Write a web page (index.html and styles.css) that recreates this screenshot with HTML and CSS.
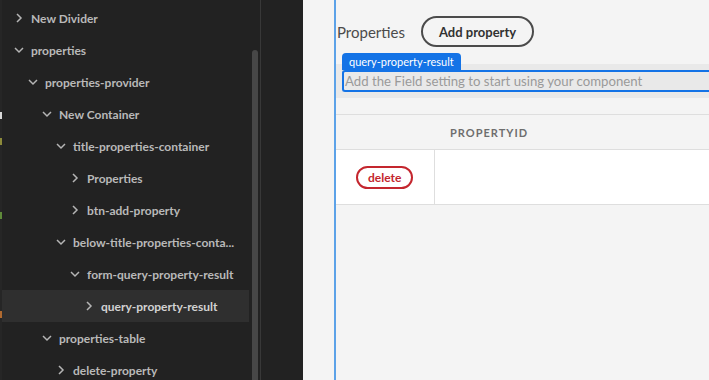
FILE: index.html
```html
<!DOCTYPE html>
<html>
<head>
<meta charset="utf-8">
<link rel="stylesheet" href="styles.css">
</head>
<body>
<div class="app">
  <aside class="sidebar">
    <div class="edge">
      <span class="mark m-white"></span>
      <span class="mark m-olive"></span>
      <span class="mark m-green"></span>
      <span class="mark m-orange"></span>
    </div>
    <ul class="tree">
      <li class="row l0"><svg class="chev" viewBox="0 0 10 10"><polyline points="3,1 7,5 3,9"/></svg><span>New Divider</span></li>
      <li class="row l0"><svg class="chev" viewBox="0 0 10 10"><polyline points="1,3 5,7 9,3"/></svg><span>properties</span></li>
      <li class="row l1"><svg class="chev" viewBox="0 0 10 10"><polyline points="1,3 5,7 9,3"/></svg><span>properties-provider</span></li>
      <li class="row l2"><svg class="chev" viewBox="0 0 10 10"><polyline points="1,3 5,7 9,3"/></svg><span>New Container</span></li>
      <li class="row l3"><svg class="chev" viewBox="0 0 10 10"><polyline points="1,3 5,7 9,3"/></svg><span>title-properties-container</span></li>
      <li class="row l4"><svg class="chev" viewBox="0 0 10 10"><polyline points="3,1 7,5 3,9"/></svg><span>Properties</span></li>
      <li class="row l4"><svg class="chev" viewBox="0 0 10 10"><polyline points="3,1 7,5 3,9"/></svg><span>btn-add-property</span></li>
      <li class="row l3"><svg class="chev" viewBox="0 0 10 10"><polyline points="1,3 5,7 9,3"/></svg><span>below-title-properties-conta...</span></li>
      <li class="row l4"><svg class="chev" viewBox="0 0 10 10"><polyline points="1,3 5,7 9,3"/></svg><span>form-query-property-result</span></li>
      <li class="row l5 selected"><svg class="chev" viewBox="0 0 10 10"><polyline points="3,1 7,5 3,9"/></svg><span>query-property-result</span></li>
      <li class="row l2"><svg class="chev" viewBox="0 0 10 10"><polyline points="1,3 5,7 9,3"/></svg><span>properties-table</span></li>
      <li class="row l3"><svg class="chev" viewBox="0 0 10 10"><polyline points="3,1 7,5 3,9"/></svg><span>delete-property</span></li>
    </ul>
    <div class="scroll"><div class="thumb"></div></div>
    <div class="divider"></div>
    <div class="rail"></div>
  </aside>
  <main class="main">
    <div class="canvas">
      <div class="title-row">
        <h2 class="title">Properties</h2>
        <button class="btn-add">Add property</button>
      </div>
      <div class="field-band">
        <div class="field-tab">query-property-result</div>
        <div class="field-box">Add the Field setting to start using your component</div>
      </div>
      <table class="ptable">
        <thead>
          <tr><th class="c1"></th><th class="c2">PROPERTYID</th></tr>
        </thead>
        <tbody>
          <tr><td class="c1"><button class="btn-del">delete</button></td><td class="c2"></td></tr>
        </tbody>
      </table>
    </div>
  </main>
</div>
</body>
</html>
```

FILE: styles.css
```css
* { box-sizing: border-box; }
html, body { margin: 0; padding: 0; }
body {
  width: 709px;
  height: 380px;
  overflow: hidden;
  font-family: Lato, "Open Sans", sans-serif;
  background: #f4f4f4;
}
.app { display: flex; height: 380px; }

.sidebar {
  width: 303px;
  flex: none;
  background: #222222;
  display: flex;
  position: relative;
}
.edge {
  width: 2px;
  flex: none;
  background: #262626;
  position: relative;
}
.mark { position: absolute; left: 0; width: 2px; height: 7px; }
.m-white { top: 112px; background: #d8d8d8; }
.m-olive { top: 138px; background: #8c8a3a; }
.m-green { top: 212px; background: #5f8a3a; }
.m-orange { top: 311px; background: #b06a30; }

.tree {
  list-style: none;
  margin: 0;
  padding: 2px 0 0;
  width: 247px;
  flex: none;
}
.row {
  height: 32px;
  display: flex;
  align-items: center;
  color: #b9b9b9;
  font-size: 12px;
  font-weight: 700;
  white-space: nowrap;
}
.row .chev {
  width: 10px;
  height: 10px;
  margin-right: 7px;
  flex: none;
  fill: none;
  stroke: #b5b5b5;
  stroke-width: 1.5;
}
.l0 { padding-left: 12px; }
.l1 { padding-left: 26px; }
.l2 { padding-left: 40px; }
.l3 { padding-left: 54px; }
.l4 { padding-left: 68px; }
.l5 { padding-left: 82px; }
.row.selected { background: #2f2f2f; color: #d2d2d2; }

.scroll {
  width: 6px;
  margin-left: 3px;
  flex: none;
  padding-top: 50px;
}
.thumb {
  height: 100%;
  background: #474747;
  border-radius: 3px 3px 0 0;
}
.divider { width: 2px; flex: none; }
.rail {
  flex: 1;
  border-left: 1px solid #383838;
  background: #222222;
}

.main {
  flex: 1;
  background: #f4f4f4;
  padding-left: 31px;
  overflow: hidden;
}
.canvas {
  height: 380px;
  border-left: 2px solid #5ca2e8;
  width: 420px;
}
.title-row {
  display: flex;
  align-items: center;
  padding-top: 16px;
  height: 47px;
}
.title {
  margin: 0 0 0 1px;
  font-weight: 400;
  font-size: 15px;
  color: #4b4b4b;
}
.btn-add {
  margin-left: 16px;
  height: 31px;
  padding: 0 16px;
  border: 2px solid #4b4b4b;
  border-radius: 16px;
  background: transparent;
  font-family: inherit;
  font-size: 13px;
  font-weight: 700;
  color: #323232;
}
.field-band {
  margin-top: 17px;
  position: relative;
  padding: 6px 0 0 6px;
  background: #e9e9e9;
  height: 34px;
}
.field-tab {
  position: absolute;
  left: 6px;
  top: -11px;
  height: 17px;
  padding: 0 7px;
  background: #1473e6;
  color: #fff;
  font-size: 11px;
  line-height: 17px;
  border-radius: 4px 4px 0 0;
}
.field-box {
  height: 22px;
  border: 2px solid #1473e6;
  border-right: none;
  border-radius: 3px 0 0 3px;
  color: #9a9a9a;
  font-size: 13.2px;
  line-height: 18px;
  padding-left: 1px;
  white-space: nowrap;
}
.ptable {
  margin-top: 16px;
  border-collapse: collapse;
  width: 420px;
}
.ptable th {
  height: 35px;
  border-top: 1px solid #dedede;
  border-bottom: 1px solid #dedede;
  background: #f4f4f4;
  font-size: 11px;
  font-weight: 700;
  letter-spacing: 1px;
  color: #6e6e6e;
  text-align: left;
  padding: 0 0 0 16px;
}
.ptable td {
  height: 55px;
  background: #fff;
  border-bottom: 1px solid #dedede;
  padding: 0;
}
.ptable .c1 { width: 98px; border-right: 1px solid #dedede; text-align: center; }
.ptable th.c1 { border-right: none; }
.btn-del {
  height: 23px;
  padding: 0 10px;
  border: 2px solid #c4262e;
  border-radius: 12px;
  background: #fff;
  color: #c4262e;
  font-family: inherit;
  font-size: 12px;
  font-weight: 700;
}
```
